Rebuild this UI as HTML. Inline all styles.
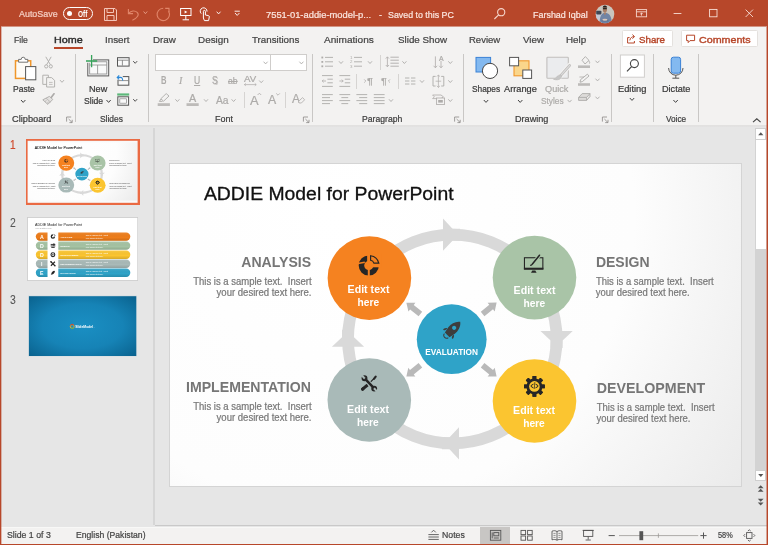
<!DOCTYPE html>
<html>
<head>
<meta charset="utf-8">
<title>PowerPoint</title>
<style>
*{box-sizing:border-box;margin:0;padding:0}
html,body{width:768px;height:545px;overflow:hidden}
body{position:relative;background:#b7472a;font-family:"Liberation Sans",sans-serif;font-size:11.5px;color:#3b3a39}
.abs,.t{position:absolute;white-space:nowrap}
.t{line-height:14px;height:14px}
#titlebar{position:absolute;left:0;top:0;width:768px;height:27px;background:#b7472a;color:#fff}
#tabs{position:absolute;left:1px;top:27px;width:766px;height:23px;background:#f3f2f1}
#ribbon{position:absolute;left:1px;top:50px;width:766px;height:75px;background:#f3f2f1}
#work{position:absolute;left:1px;top:125px;width:766px;height:402px;background:#e6e6e6}
#status{position:absolute;left:1px;top:527px;width:766px;height:17px;background:#f3f2f1}
.sep{position:absolute;width:1px;background:#c8c6c4;top:54px;height:66px}
.glabel{position:absolute;top:112px;height:14px;line-height:14px;font-size:11px;color:#444}
#app{position:absolute;left:0;top:0;width:768px;height:545px;will-change:transform;overflow:hidden}
svg{position:absolute;overflow:visible}
svg text{white-space:pre}
</style>
</head>
<body>
<div id="app">
<div id="titlebar"></div>
<div id="tabs"></div>
<div id="ribbon"></div>
<div id="work"></div>
<div id="status"></div>
<span class="t" style="left:18.90px;top:7.21px;font-size:9.4px;line-height:13px;height:13px;color:#f5cfc3;transform:scaleX(0.9494);transform-origin:0 0;-webkit-text-stroke:0.22px #f5cfc3;">AutoSave</span><div class="abs" style="left:63px;top:7.2px;width:30px;height:12.8px;border:1.1px solid #fff;border-radius:6.4px"></div><div class="abs" style="left:67px;top:11px;width:5px;height:5px;border-radius:3px;background:#fff"></div><span class="t" style="left:78.40px;top:7.70px;font-size:8.4px;line-height:12px;height:12px;color:#fff;transform:scaleX(0.7751);transform-origin:0 0;font-weight:700;">Off</span><svg width="768" height="27" style="left:0;top:0"><g fill="none" stroke="#f3c5b8" stroke-width="1"><path d="M104.5,8.5 H115 L116.5,10 V20.5 H104.5 Z"/><path d="M107,8.5 V12.5 H113.5 V8.5"/><path d="M107,20.5 V15.5 H114 V20.5"/></g><g fill="none" stroke="#e1866a" stroke-width="1.1"><path d="M128.4,9 V13.6 H133"/><path d="M128.6,13.4 C131,10.6 135,10.2 137.2,12.4 C139.6,14.8 137.6,17.6 132.4,20.2"/></g><path d="M143.60,11.50 L145.40,13.70 L147.20,11.50" fill="none" stroke="#e6a08a" stroke-width="0.9"/><g fill="none" stroke="#e1866a" stroke-width="1.1"><path d="M168.6,11.2 A6.2,6.2 0 1 1 163.2,8.2"/><path d="M165.2,8.4 H169 V12.2"/></g><g fill="none" stroke="#fff" stroke-width="1"><rect x="180.6" y="8.5" width="10.4" height="7"/><path d="M185.8,15.5 V19.6 M182.6,19.8 H189"/><path d="M184.6,10.4 L187.4,12 L184.6,13.6 Z" fill="#fff" stroke="none"/></g><g fill="none" stroke="#fff" stroke-width="1"><path d="M201.2,13.6 A3.4,3.4 0 1 1 207,11.6"/><path d="M203.4,18 V11.4 a1,1 0 0 1 2,0 V15 l3,0.6 a1.2,1.2 0 0 1 0.9,1.4 L208.6,20.6 H204.4 Z"/></g><path d="M216.70,11.70 L218.60,13.90 L220.50,11.70" fill="none" stroke="#fff" stroke-width="0.9"/><path d="M234.6,11.2 H239.8" stroke="#fff" stroke-width="0.9"/><path d="M235.00,13.00 L237.20,15.40 L239.40,13.00" fill="none" stroke="#fff" stroke-width="0.9"/><g fill="none" stroke="#f6d6cc" stroke-width="1.1"><circle cx="501.2" cy="12.2" r="3.6"/><path d="M498.6,14.8 L494.4,19"/></g><g fill="none" stroke="#f6d6cc" stroke-width="0.9"><rect x="636.4" y="9.6" width="10.2" height="7.2"/><path d="M636.4,11.8 H646.6"/><path d="M641.5,15.6 V13 M640.2,14.2 L641.5,12.9 L642.8,14.2"/></g><path d="M673.6,13.5 H681.4" stroke="#fbe6df" stroke-width="0.85"/><rect x="709.6" y="9.4" width="7.4" height="7.4" fill="none" stroke="#fbe6df" stroke-width="0.85"/><path d="M745.6,9.6 L753,17 M753,9.6 L745.6,17" stroke="#fbe6df" stroke-width="0.85"/><defs><clipPath id="av"><circle cx="605" cy="14" r="9.3"/></clipPath></defs><g clip-path="url(#av)"><rect x="595" y="4" width="20" height="20" fill="#c9c5bd"/><rect x="595" y="14.2" width="7" height="10" fill="#c3c8d5"/><rect x="596.2" y="10.8" width="5.2" height="3.6" rx="0.8" fill="#3f4654"/><path d="M599.6,24 C599.6,17 601,13.4 604.9,12.8 C609.4,13.2 611.6,16 612,24 Z" fill="#7185a5"/><path d="M603.6,12.6 L604.9,15.4 L606.3,12.6 Z" fill="#a97f66"/><ellipse cx="604.9" cy="9.4" rx="2.1" ry="2.9" fill="#a97f66"/><path d="M602.6,8.4 a2.3,2.9 0 0 1 4.6,0 L607.2,7.6 L602.6,7.6 Z" fill="#26211f"/><rect x="602.9" y="8.0" width="4" height="1.3" rx="0.5" fill="#2a2522"/><path d="M601.4,21.6 L608.6,21.6 L608.2,19.4 L601.8,19.4 Z" fill="#5f7394"/><ellipse cx="604.9" cy="19.7" rx="2.6" ry="1.0" fill="#dcc8ba"/></g></svg><span class="t" style="left:266.30px;top:7.61px;font-size:9.4px;line-height:13px;height:13px;color:#fbe6df;transform:scaleX(0.9986);transform-origin:0 0;-webkit-text-stroke:0.22px #fbe6df;">7551-01-addie-model-p...</span><span class="t" style="left:379.20px;top:7.61px;font-size:9.4px;line-height:13px;height:13px;color:#fbe6df;transform:scaleX(0.9585);transform-origin:0 0;-webkit-text-stroke:0.22px #fbe6df;">-</span><span class="t" style="left:387.70px;top:7.61px;font-size:9.4px;line-height:13px;height:13px;color:#fbe6df;transform:scaleX(0.9427);transform-origin:0 0;-webkit-text-stroke:0.22px #fbe6df;">Saved to this PC</span><span class="t" style="left:532.50px;top:7.61px;font-size:9.4px;line-height:13px;height:13px;color:#fbe6df;transform:scaleX(0.9535);transform-origin:0 0;-webkit-text-stroke:0.22px #fbe6df;">Farshad Iqbal</span>
<span class="t" style="left:14.20px;top:32.71px;font-size:9.6px;line-height:13px;height:13px;color:#444;transform:scaleX(0.8986);transform-origin:0 0;-webkit-text-stroke:0.22px #444;">File</span><span class="t" style="left:104.60px;top:32.71px;font-size:9.6px;line-height:13px;height:13px;color:#444;transform:scaleX(1.0247);transform-origin:0 0;-webkit-text-stroke:0.22px #444;">Insert</span><span class="t" style="left:152.50px;top:32.71px;font-size:9.6px;line-height:13px;height:13px;color:#444;transform:scaleX(1.0223);transform-origin:0 0;-webkit-text-stroke:0.22px #444;">Draw</span><span class="t" style="left:197.70px;top:32.71px;font-size:9.6px;line-height:13px;height:13px;color:#444;transform:scaleX(1.0307);transform-origin:0 0;-webkit-text-stroke:0.22px #444;">Design</span><span class="t" style="left:251.50px;top:32.71px;font-size:9.6px;line-height:13px;height:13px;color:#444;transform:scaleX(1.0152);transform-origin:0 0;-webkit-text-stroke:0.22px #444;">Transitions</span><span class="t" style="left:323.50px;top:32.71px;font-size:9.6px;line-height:13px;height:13px;color:#444;transform:scaleX(1.0487);transform-origin:0 0;-webkit-text-stroke:0.22px #444;">Animations</span><span class="t" style="left:397.90px;top:32.71px;font-size:9.6px;line-height:13px;height:13px;color:#444;transform:scaleX(1.0203);transform-origin:0 0;-webkit-text-stroke:0.22px #444;">Slide Show</span><span class="t" style="left:469.40px;top:32.71px;font-size:9.6px;line-height:13px;height:13px;color:#444;transform:scaleX(0.9912);transform-origin:0 0;-webkit-text-stroke:0.22px #444;">Review</span><span class="t" style="left:522.50px;top:32.71px;font-size:9.6px;line-height:13px;height:13px;color:#444;transform:scaleX(1.0177);transform-origin:0 0;-webkit-text-stroke:0.22px #444;">View</span><span class="t" style="left:565.80px;top:32.71px;font-size:9.6px;line-height:13px;height:13px;color:#444;transform:scaleX(1.0231);transform-origin:0 0;-webkit-text-stroke:0.22px #444;">Help</span><span class="t" style="left:54.20px;top:32.71px;font-size:9.6px;line-height:13px;height:13px;color:#2b2b2b;transform:scaleX(1.1208);transform-origin:0 0;-webkit-text-stroke:0.4px #2b2b2b;">Home</span><div class="abs" style="left:54.2px;top:46.9px;width:29.2px;height:1.9px;background:#b7472a"></div><div class="abs" style="left:621.5px;top:30.3px;width:51.7px;height:16.8px;background:#fff;border:1px solid #e4e1de;border-radius:1.5px"></div><div class="abs" style="left:680.5px;top:30.3px;width:77.2px;height:16.8px;background:#fff;border:1px solid #e4e1de;border-radius:1.5px"></div><span class="t" style="left:639.30px;top:32.81px;font-size:9.6px;line-height:13px;height:13px;color:#b7472a;transform:scaleX(1.0150);transform-origin:0 0;-webkit-text-stroke:0.4px #b7472a;">Share</span><span class="t" style="left:698.60px;top:32.81px;font-size:9.6px;line-height:13px;height:13px;color:#b7472a;transform:scaleX(1.1140);transform-origin:0 0;-webkit-text-stroke:0.4px #b7472a;">Comments</span><svg width="768" height="24" style="left:0;top:27px"><g fill="none" stroke="#b7472a" stroke-width="1"><path d="M629.6,10.6 H627.6 V16 H634.4 V14"/><path d="M629.8,13.4 C630.2,10.8 632,9.6 634,9.6 M632.4,7.6 L634.6,9.6 L632.4,11.6"/><path d="M686.6,8.2 H694.6 V13.6 H690 L688.2,15.6 V13.6 H686.6 Z"/></g></svg>
<div class="abs" style="left:75.1px;top:54px;width:1px;height:68px;background:#c9c7c5"></div><div class="abs" style="left:147.9px;top:54px;width:1px;height:68px;background:#c9c7c5"></div><div class="abs" style="left:311.9px;top:54px;width:1px;height:68px;background:#c9c7c5"></div><div class="abs" style="left:463.3px;top:54px;width:1px;height:68px;background:#c9c7c5"></div><div class="abs" style="left:610.5px;top:54px;width:1px;height:68px;background:#c9c7c5"></div><div class="abs" style="left:652.5px;top:54px;width:1px;height:68px;background:#c9c7c5"></div><div class="abs" style="left:698.0px;top:54px;width:1px;height:68px;background:#c9c7c5"></div><div class="abs" style="left:244.1px;top:92.4px;width:1px;height:15.599999999999994px;background:#d6d4d2"></div><div class="abs" style="left:285.2px;top:92.4px;width:1px;height:15.599999999999994px;background:#d6d4d2"></div><div class="abs" style="left:379.9px;top:55px;width:1px;height:15px;background:#d6d4d2"></div><div class="abs" style="left:356.2px;top:74px;width:1px;height:15px;background:#d6d4d2"></div><div class="abs" style="left:397.5px;top:74px;width:1px;height:15px;background:#d6d4d2"></div><span class="t" style="left:11.90px;top:112.41px;font-size:9.4px;line-height:13px;height:13px;color:#3c3c3c;transform:scaleX(0.9843);transform-origin:0 0;-webkit-text-stroke:0.22px #3c3c3c;">Clipboard</span><span class="t" style="left:100.00px;top:112.41px;font-size:9.4px;line-height:13px;height:13px;color:#3c3c3c;transform:scaleX(0.8984);transform-origin:0 0;-webkit-text-stroke:0.22px #3c3c3c;">Slides</span><span class="t" style="left:214.70px;top:112.41px;font-size:9.4px;line-height:13px;height:13px;color:#3c3c3c;transform:scaleX(0.9571);transform-origin:0 0;-webkit-text-stroke:0.22px #3c3c3c;">Font</span><span class="t" style="left:361.60px;top:112.41px;font-size:9.4px;line-height:13px;height:13px;color:#3c3c3c;transform:scaleX(0.9204);transform-origin:0 0;-webkit-text-stroke:0.22px #3c3c3c;">Paragraph</span><span class="t" style="left:514.60px;top:112.41px;font-size:9.4px;line-height:13px;height:13px;color:#3c3c3c;transform:scaleX(0.9716);transform-origin:0 0;-webkit-text-stroke:0.22px #3c3c3c;">Drawing</span><span class="t" style="left:665.70px;top:112.41px;font-size:9.4px;line-height:13px;height:13px;color:#3c3c3c;transform:scaleX(0.8785);transform-origin:0 0;-webkit-text-stroke:0.22px #3c3c3c;">Voice</span><span class="t" style="left:12.60px;top:81.61px;font-size:9.4px;line-height:13px;height:13px;color:#383838;transform:scaleX(0.9070);transform-origin:0 0;-webkit-text-stroke:0.22px #383838;">Paste</span><span class="t" style="left:89.40px;top:81.61px;font-size:9.4px;line-height:13px;height:13px;color:#383838;transform:scaleX(0.9732);transform-origin:0 0;-webkit-text-stroke:0.22px #383838;">New</span><span class="t" style="left:84.30px;top:94.11px;font-size:9.4px;line-height:13px;height:13px;color:#383838;transform:scaleX(0.9186);transform-origin:0 0;-webkit-text-stroke:0.22px #383838;">Slide</span><span class="t" style="left:471.80px;top:81.61px;font-size:9.4px;line-height:13px;height:13px;color:#383838;transform:scaleX(0.8846);transform-origin:0 0;-webkit-text-stroke:0.22px #383838;">Shapes</span><span class="t" style="left:504.40px;top:81.61px;font-size:9.4px;line-height:13px;height:13px;color:#383838;transform:scaleX(0.9839);transform-origin:0 0;-webkit-text-stroke:0.22px #383838;">Arrange</span><span class="t" style="left:545.20px;top:81.61px;font-size:9.4px;line-height:13px;height:13px;color:#adaba9;transform:scaleX(0.9781);transform-origin:0 0;-webkit-text-stroke:0.22px #adaba9;">Quick</span><span class="t" style="left:541.30px;top:94.11px;font-size:9.4px;line-height:13px;height:13px;color:#adaba9;transform:scaleX(0.8868);transform-origin:0 0;-webkit-text-stroke:0.22px #adaba9;">Styles</span><span class="t" style="left:618.00px;top:81.61px;font-size:9.4px;line-height:13px;height:13px;color:#383838;transform:scaleX(0.9916);transform-origin:0 0;-webkit-text-stroke:0.22px #383838;">Editing</span><span class="t" style="left:661.80px;top:81.61px;font-size:9.4px;line-height:13px;height:13px;color:#383838;transform:scaleX(0.9742);transform-origin:0 0;-webkit-text-stroke:0.22px #383838;">Dictate</span><div class="abs" style="left:155px;top:54.2px;width:152px;height:17.2px;background:#fff;border:1px solid #cfcdcb"></div><div class="abs" style="left:270px;top:54.2px;width:1px;height:17.2px;background:#cfcdcb"></div><span class="t" style="left:161.20px;top:73.02px;font-size:10.6px;line-height:15px;height:15px;color:#adaba9;transform:scaleX(0.7185);transform-origin:0 0;font-weight:700;">B</span><span class="t" style="left:179.40px;top:73.02px;font-size:10.6px;line-height:15px;height:15px;color:#adaba9;transform:scaleX(0.9508);transform-origin:0 0;font-style:italic;-webkit-text-stroke:0.22px #adaba9;font-family:'Liberation Serif',serif;">I</span><span class="t" style="left:194.40px;top:72.82px;font-size:10.4px;line-height:15px;height:15px;color:#adaba9;transform:scaleX(0.8255);transform-origin:0 0;-webkit-text-stroke:0.22px #adaba9;text-decoration:underline;">U</span><span class="t" style="left:211.80px;top:73.22px;font-size:10.8px;line-height:15px;height:15px;color:#adaba9;transform:scaleX(0.8051);transform-origin:0 0;-webkit-text-stroke:0.22px #adaba9;text-shadow:0.8px 0.8px 0 #cfcdcb;">S</span><span class="t" style="left:227.60px;top:74.41px;font-size:9.4px;line-height:13px;height:13px;color:#adaba9;transform:scaleX(0.9183);transform-origin:0 0;-webkit-text-stroke:0.22px #adaba9;text-decoration:line-through;">ab</span><span class="t" style="left:244.20px;top:72.70px;font-size:8.6px;line-height:12px;height:12px;color:#adaba9;transform:scaleX(1.1260);transform-origin:0 0;-webkit-text-stroke:0.22px #adaba9;">AV</span><span class="t" style="left:189.40px;top:90.62px;font-size:10.8px;line-height:15px;height:15px;color:#adaba9;transform:scaleX(0.9995);transform-origin:0 0;-webkit-text-stroke:0.22px #adaba9;">A</span><span class="t" style="left:215.80px;top:92.62px;font-size:10.6px;line-height:15px;height:15px;color:#adaba9;transform:scaleX(0.9718);transform-origin:0 0;-webkit-text-stroke:0.22px #adaba9;">Aa</span><span class="t" style="left:250.00px;top:90.85px;font-size:13.4px;line-height:19px;height:19px;color:#adaba9;transform:scaleX(0.9622);transform-origin:0 0;-webkit-text-stroke:0.22px #adaba9;">A</span><span class="t" style="left:268.20px;top:92.24px;font-size:12.4px;line-height:17px;height:17px;color:#adaba9;transform:scaleX(0.9914);transform-origin:0 0;-webkit-text-stroke:0.22px #adaba9;">A</span><span class="t" style="left:291.80px;top:90.14px;font-size:12.6px;line-height:18px;height:18px;color:#adaba9;transform:scaleX(0.9519);transform-origin:0 0;-webkit-text-stroke:0.22px #adaba9;">A</span><span class="t" style="left:367.20px;top:74.41px;font-size:9.6px;line-height:13px;height:13px;color:#adaba9;transform:scaleX(1.1635);transform-origin:0 0;-webkit-text-stroke:0.22px #adaba9;">¶</span><span class="t" style="left:380.80px;top:74.41px;font-size:9.6px;line-height:13px;height:13px;color:#adaba9;transform:scaleX(1.1247);transform-origin:0 0;-webkit-text-stroke:0.22px #adaba9;">¶</span><span class="t" style="left:438.80px;top:53.98px;font-size:6.6px;line-height:9px;height:9px;color:#adaba9;transform:scaleX(1.0449);transform-origin:0 0;-webkit-text-stroke:0.22px #adaba9;">A</span><svg width="768" height="80" style="left:0;top:50px"><g transform="translate(0,-50)"><rect x="15.5" y="60.8" width="15.2" height="17.6" fill="#fefbf6" stroke="#f0962a" stroke-width="1.5"/><path d="M18.6,62.2 V59.4 H21.2 a2,2.2 0 0 1 4,0 H27.8 V62.2 Z" fill="#fff" stroke="#666" stroke-width="0.9"/><rect x="25.6" y="66.6" width="10.2" height="13.2" fill="#fff" stroke="#555" stroke-width="1"/><path d="M21.00,100.00 L23.20,102.40 L25.40,100.00" fill="none" stroke="#444" stroke-width="1"/><g fill="none" stroke="#adaba9" stroke-width="0.9"><path d="M45.8,56.8 L50.4,64.8 M51.2,56.8 L46.6,64.8"/><circle cx="46.2" cy="66.4" r="1.6"/><circle cx="50.8" cy="66.4" r="1.6"/></g><g fill="#f3f2f1" stroke="#adaba9" stroke-width="0.9"><path d="M42.8,75.2 H48.4 V84.4 H42.8 Z"/><path d="M46.6,77.6 H51.6 L54.6,80.4 V87 H46.6 Z"/><path d="M49,82.4 H52.6 M49,84.4 H52.6" stroke-width="0.7"/></g><path d="M60.00,80.10 L62.00,82.30 L64.00,80.10" fill="none" stroke="#adaba9" stroke-width="0.9"/><g fill="none" stroke="#adaba9" stroke-width="0.9"><path d="M54,93.8 L50.8,98" stroke-width="1.7" stroke-linecap="round"/><path d="M49.4,96.4 L52.8,99.4 L47.8,104.4 L42.8,99.8 Z" fill="#e4e2e0"/><path d="M46.2,98.2 L50.6,102.2 M45,101.6 L46.6,100.2 M47,103.4 L48.8,101.8" stroke-width="0.7"/></g><g fill="none" stroke="#8a8886" stroke-width="0.8"><path d="M66.6,121.6 V117 H71.19999999999999"/><path d="M68.6,119 L72.0,122.4 M72.19999999999999,119.8 V122.6 H69.39999999999999"/></g><rect x="87.8" y="59.9" width="20.9" height="16" fill="#f6f6f6" stroke="#5a5a5a" stroke-width="1"/><rect x="89.7" y="61.8" width="17.1" height="12.2" fill="#fafafa" stroke="#8a8a8a" stroke-width="0.8"/><path d="M89.7,65 H106.8 M97.6,65 V74" stroke="#8a8a8a" stroke-width="0.8"/><rect x="85.4" y="54.6" width="7.6" height="8.2" fill="#f3f2f1"/><path d="M91.6,55 V67.2 M86,61 H97.2" stroke="#35a35a" stroke-width="1.3"/><path d="M106.50,100.00 L108.60,102.40 L110.70,100.00" fill="none" stroke="#444" stroke-width="1"/><rect x="117.5" y="57.7" width="11.6" height="8.4" fill="#fafafa" stroke="#555" stroke-width="1"/><path d="M118,60.2 H128.6 M122.4,60.2 V65.6" stroke="#777" stroke-width="0.8"/><path d="M133.20,61.10 L135.20,63.30 L137.20,61.10" fill="none" stroke="#444" stroke-width="0.9"/><rect x="118" y="76.6" width="10.8" height="8.6" fill="#fafafa" stroke="#555" stroke-width="1"/><path d="M118.4,80.6 H128.4" stroke="#777" stroke-width="0.8"/><rect x="116.2" y="74.6" width="6.6" height="5" fill="#f3f2f1"/><path d="M117.2,77.4 H120.4 C122,77.4 122.8,78.6 122.6,80.6 M119.2,75.4 L117.2,77.4 L119.2,79.4" stroke="#2b88d8" stroke-width="1.1" fill="none"/><rect x="117.8" y="96.8" width="10.8" height="8.4" fill="#fafafa" stroke="#555" stroke-width="1"/><path d="M117.2,94.5 H129.2" stroke="#5cb87a" stroke-width="2.2"/><rect x="119.8" y="98.8" width="6.8" height="4.4" fill="none" stroke="#888" stroke-width="0.7"/><path d="M133.20,99.10 L135.20,101.30 L137.20,99.10" fill="none" stroke="#444" stroke-width="0.9"/><path d="M263.60,61.70 L265.60,63.90 L267.60,61.70" fill="none" stroke="#adaba9" stroke-width="0.9"/><path d="M299.40,61.70 L301.40,63.90 L303.40,61.70" fill="none" stroke="#adaba9" stroke-width="0.9"/><path d="M259.20,80.50 L261.20,82.70 L263.20,80.50" fill="none" stroke="#adaba9" stroke-width="0.9"/><path d="M244.4,84.6 H256.2 M245.8,83.4 L244.4,84.6 L245.8,85.8 M254.8,83.4 L256.2,84.6 L254.8,85.8" fill="none" stroke="#adaba9" stroke-width="0.7"/><g fill="none" stroke="#adaba9" stroke-width="0.9"><path d="M166.2,93.6 L169,96 L163.6,101.2 L160.8,98.8 Z"/><path d="M161,99 L159.4,101.4 H162.6"/></g><rect x="157.7" y="103.2" width="12.2" height="2.8" fill="#bdbbb9"/><path d="M175.40,99.30 L177.40,101.50 L179.40,99.30" fill="none" stroke="#adaba9" stroke-width="0.9"/><rect x="186.5" y="103.2" width="12.2" height="2.8" fill="#bdbbb9"/><path d="M204.00,99.30 L206.00,101.50 L208.00,99.30" fill="none" stroke="#adaba9" stroke-width="0.9"/><path d="M231.60,99.30 L233.60,101.50 L235.60,99.30" fill="none" stroke="#adaba9" stroke-width="0.9"/><path d="M257.6,95 L259.4,93.2 L261.2,95" fill="none" stroke="#adaba9" stroke-width="0.8"/><path d="M276.2,93.4 L278,95.2 L279.8,93.4" fill="none" stroke="#adaba9" stroke-width="0.8"/><path d="M299.6,100.4 L302.6,97.6 L304.6,99.8 L301.4,103 L299.2,103 L298.6,101.6 Z" fill="#f3f2f1" stroke="#adaba9" stroke-width="0.8"/><g fill="none" stroke="#8a8886" stroke-width="0.8"><path d="M303.4,121.6 V117 H308.0"/><path d="M305.4,119 L308.79999999999995,122.4 M309.0,119.8 V122.6 H306.2"/></g><rect x="321.4" y="56.6" width="1.8" height="1.8" fill="#adaba9"/><rect x="321.4" y="61.0" width="1.8" height="1.8" fill="#adaba9"/><rect x="321.4" y="65.4" width="1.8" height="1.8" fill="#adaba9"/><path d="M325,57.4 H333" stroke="#adaba9" stroke-width="0.9"/><path d="M325,61.8 H333" stroke="#adaba9" stroke-width="0.9"/><path d="M325,66.2 H333" stroke="#adaba9" stroke-width="0.9"/><path d="M339.00,61.30 L341.00,63.50 L343.00,61.30" fill="none" stroke="#adaba9" stroke-width="0.9"/><text x="350" y="59.0" font-size="4.4" fill="#adaba9">1</text><text x="350" y="63.4" font-size="4.4" fill="#adaba9">2</text><text x="350" y="67.8" font-size="4.4" fill="#adaba9">3</text><path d="M354,57.4 H362" stroke="#adaba9" stroke-width="0.9"/><path d="M354,61.8 H362" stroke="#adaba9" stroke-width="0.9"/><path d="M354,66.2 H362" stroke="#adaba9" stroke-width="0.9"/><path d="M368.00,61.30 L370.00,63.50 L372.00,61.30" fill="none" stroke="#adaba9" stroke-width="0.9"/><path d="M390.4,57.2 H398.8" stroke="#adaba9" stroke-width="0.9"/><path d="M390.4,60.2 H398.8" stroke="#adaba9" stroke-width="0.9"/><path d="M390.4,63.2 H398.8" stroke="#adaba9" stroke-width="0.9"/><path d="M390.4,66.2 H398.8" stroke="#adaba9" stroke-width="0.9"/><path d="M387.4,57 V66.6 M385.8,58.6 L387.4,56.8 L389,58.6 M385.8,65 L387.4,66.8 L389,65" fill="none" stroke="#adaba9" stroke-width="0.8"/><path d="M402.40,61.30 L404.40,63.50 L406.40,61.30" fill="none" stroke="#adaba9" stroke-width="0.9"/><path d="M435.4,56.4 V67.6 M433.6,65.8 L435.4,67.8 L437.2,65.8 M441,60.8 V67.6 M439.2,65.8 L441,67.8 L442.8,65.8" fill="none" stroke="#adaba9" stroke-width="0.8"/><path d="M448.30,61.30 L450.30,63.50 L452.30,61.30" fill="none" stroke="#adaba9" stroke-width="0.9"/><path d="M322,75.6 H332.8" stroke="#adaba9" stroke-width="0.9"/><path d="M322,86.4 H332.8" stroke="#adaba9" stroke-width="0.9"/><path d="M327.4,79.2 H332.8" stroke="#adaba9" stroke-width="0.9"/><path d="M327.4,82.8 H332.8" stroke="#adaba9" stroke-width="0.9"/><path d="M326,81 H322.2 M323.6,79.6 L322.2,81 L323.6,82.4" fill="none" stroke="#adaba9" stroke-width="0.8"/><path d="M339.4,75.6 H350.2" stroke="#adaba9" stroke-width="0.9"/><path d="M339.4,86.4 H350.2" stroke="#adaba9" stroke-width="0.9"/><path d="M344.8,79.2 H350.2" stroke="#adaba9" stroke-width="0.9"/><path d="M344.8,82.8 H350.2" stroke="#adaba9" stroke-width="0.9"/><path d="M339.4,81 H343.2 M341.8,79.6 L343.2,81 L341.8,82.4" fill="none" stroke="#adaba9" stroke-width="0.8"/><path d="M364.2,79.4 L365.8,81 L364.2,82.6" fill="none" stroke="#adaba9" stroke-width="0.8"/><path d="M390,79.4 L388.4,81 L390,82.6" fill="none" stroke="#adaba9" stroke-width="0.8"/><path d="M405,78 H409.4" stroke="#adaba9" stroke-width="0.9"/><path d="M405,81 H409.4" stroke="#adaba9" stroke-width="0.9"/><path d="M405,84 H409.4" stroke="#adaba9" stroke-width="0.9"/><path d="M411,78 H415.4" stroke="#adaba9" stroke-width="0.9"/><path d="M411,81 H415.4" stroke="#adaba9" stroke-width="0.9"/><path d="M411,84 H415.4" stroke="#adaba9" stroke-width="0.9"/><path d="M420.00,80.30 L422.00,82.50 L424.00,80.30" fill="none" stroke="#adaba9" stroke-width="0.9"/><path d="M435.6,76.4 H433 V86 H435.6 M441.2,76.4 H443.8 V86 H441.2" fill="none" stroke="#adaba9" stroke-width="0.9"/><path d="M438.4,75 V87.4 M436.8,76.6 L438.4,75 L440,76.6 M436.8,85.8 L438.4,87.4 L440,85.8 M435.6,81.2 H441.2" fill="none" stroke="#adaba9" stroke-width="0.7"/><path d="M448.30,80.30 L450.30,82.50 L452.30,80.30" fill="none" stroke="#adaba9" stroke-width="0.9"/><path d="M322,94.6 H332.8" stroke="#adaba9" stroke-width="0.9"/><path d="M322,100.6 H332.8" stroke="#adaba9" stroke-width="0.9"/><path d="M322,97.6 H330" stroke="#adaba9" stroke-width="0.9"/><path d="M322,103.6 H330" stroke="#adaba9" stroke-width="0.9"/><path d="M339.4,94.6 H350.2" stroke="#adaba9" stroke-width="0.9"/><path d="M339.4,100.6 H350.2" stroke="#adaba9" stroke-width="0.9"/><path d="M341.4,97.6 H348.2" stroke="#adaba9" stroke-width="0.9"/><path d="M341.4,103.6 H348.2" stroke="#adaba9" stroke-width="0.9"/><path d="M356.4,94.6 H367.2" stroke="#adaba9" stroke-width="0.9"/><path d="M356.4,100.6 H367.2" stroke="#adaba9" stroke-width="0.9"/><path d="M359.2,97.6 H367.2" stroke="#adaba9" stroke-width="0.9"/><path d="M359.2,103.6 H367.2" stroke="#adaba9" stroke-width="0.9"/><path d="M373.8,94.6 H384.6" stroke="#adaba9" stroke-width="0.9"/><path d="M373.8,97.6 H384.6" stroke="#adaba9" stroke-width="0.9"/><path d="M373.8,100.6 H384.6" stroke="#adaba9" stroke-width="0.9"/><path d="M373.8,103.6 H384.6" stroke="#adaba9" stroke-width="0.9"/><path d="M389.00,99.30 L391.00,101.50 L393.00,99.30" fill="none" stroke="#adaba9" stroke-width="0.9"/><path d="M432.6,95 H441 L443.4,96.8 L441,98.6 H432.6 L434.4,96.8 Z" fill="none" stroke="#adaba9" stroke-width="0.8"/><rect x="436.4" y="98" width="8.2" height="6.4" fill="#f3f2f1" stroke="#adaba9" stroke-width="0.8"/><rect x="438.2" y="100" width="4.6" height="2.6" fill="#adaba9"/><path d="M448.30,99.30 L450.30,101.50 L452.30,99.30" fill="none" stroke="#adaba9" stroke-width="0.9"/><g fill="none" stroke="#8a8886" stroke-width="0.8"><path d="M454.6,121.6 V117 H459.20000000000005"/><path d="M456.6,119 L460.0,122.4 M460.20000000000005,119.8 V122.6 H457.40000000000003"/></g><rect x="476" y="57.4" width="14.6" height="14.6" fill="#83b9f0" stroke="#3b82d6" stroke-width="1"/><circle cx="490" cy="70.9" r="7.6" fill="#fff" stroke="#444" stroke-width="1"/><path d="M483.80,100.00 L486.00,102.40 L488.20,100.00" fill="none" stroke="#444" stroke-width="1"/><rect x="514" y="60.8" width="15" height="15" fill="#fad68b" stroke="#f0982d" stroke-width="1.1"/><rect x="509.6" y="57.4" width="9" height="8.4" fill="#fff" stroke="#555" stroke-width="1"/><rect x="522.8" y="70" width="8.8" height="8.4" fill="#fff" stroke="#555" stroke-width="1"/><path d="M518.00,100.00 L520.20,102.40 L522.40,100.00" fill="none" stroke="#444" stroke-width="1"/><rect x="546.9" y="57.3" width="21.4" height="20.9" rx="0.8" fill="#ebecee" stroke="#c1bfbd" stroke-width="1.1"/><path d="M570.6,64.4 L558.6,77.8" stroke="#f3f2f1" stroke-width="4.8"/><path d="M569.7,65.4 L560.6,75.6" stroke="#bcbab8" stroke-width="2.6" stroke-linecap="round"/><path d="M569.7,65.4 L560.6,75.6" stroke="#dcdcdc" stroke-width="1.3" stroke-linecap="round"/><path d="M561.2,75.0 C559,74.6 557.4,75.6 556.4,77.2 C555.6,78.4 554.6,79 553.4,79.2 C556,80.4 559.4,80 560.8,78.2 C561.6,77.2 561.8,76 561.2,75.0 Z" fill="#c6c6c6" stroke="#b9b7b5" stroke-width="0.5"/><path d="M567.60,99.90 L569.60,102.10 L571.60,99.90" fill="none" stroke="#adaba9" stroke-width="0.9"/><path d="M582,60.2 L585.4,56.6 L589,60.4 L585,64 Z M588.6,60.6 C589.8,62 590,63 589.4,63.6" fill="none" stroke="#adaba9" stroke-width="0.9"/><rect x="578" y="65.4" width="12" height="2.6" fill="#bdbbb9"/><path d="M595.50,60.70 L597.50,62.90 L599.50,60.70" fill="none" stroke="#adaba9" stroke-width="0.9"/><path d="M580,82.2 L580.6,79.6 L587.4,74.2 L589,76 L582.4,81.6 Z" fill="none" stroke="#adaba9" stroke-width="0.9"/><path d="M579.4,77 H584" stroke="#adaba9" stroke-width="0.8"/><rect x="578" y="83.2" width="12" height="2.6" fill="#bdbbb9"/><path d="M595.50,78.70 L597.50,80.90 L599.50,78.70" fill="none" stroke="#adaba9" stroke-width="0.9"/><path d="M578.6,97.4 L582.2,93.6 H590 L586.6,97.4 Z M578.6,97.4 V100.4 H586.6 V97.4 M586.6,100.4 L590,96.6 V93.6" fill="#dddbd9" stroke="#adaba9" stroke-width="0.9" stroke-linejoin="round"/><path d="M595.50,96.70 L597.50,98.90 L599.50,96.70" fill="none" stroke="#adaba9" stroke-width="0.9"/><g fill="none" stroke="#8a8886" stroke-width="0.8"><path d="M602.4,121.6 V117 H607.0"/><path d="M604.4,119 L607.8,122.4 M608.0,119.8 V122.6 H605.1999999999999"/></g><rect x="620.4" y="55" width="24" height="22.2" fill="#fff" stroke="#d0cecc" stroke-width="1"/><circle cx="634.4" cy="63.6" r="4" fill="none" stroke="#444" stroke-width="1.1"/><path d="M631.6,66.6 L627,71.4" stroke="#444" stroke-width="1.2"/><path d="M629.80,98.00 L632.00,100.40 L634.20,98.00" fill="none" stroke="#444" stroke-width="1"/><path d="M668.6,68 a7.2,7.2 0 0 0 14.4,0" fill="none" stroke="#555" stroke-width="1"/><path d="M675.8,75.2 V78 M672.4,78.2 H679.2" stroke="#555" stroke-width="1"/><rect x="671.2" y="57.2" width="9.4" height="16" rx="2.2" fill="#83b9f0" stroke="#3b82d6" stroke-width="1"/><path d="M673.40,100.00 L675.60,102.40 L677.80,100.00" fill="none" stroke="#444" stroke-width="1"/><path d="M753,122.2 L756.8,118.8 L760.6,122.2" fill="none" stroke="#444" stroke-width="1.1"/></g></svg>
<div class="abs" style="left:153px;top:128px;width:2px;height:397px;background:#d6d6d6"></div><div class="abs" style="left:1px;top:124.6px;width:766px;height:2.4px;background:linear-gradient(#e3e2e1,#e1e0df 60%,#e5e5e5)"></div><div class="abs" style="left:25.6px;top:138.8px;width:114px;height:65.8px;background:#ea6a43"></div><div class="abs" style="left:27.4px;top:217.4px;width:110.4px;height:63.2px;background:#cdcdcd"></div><div class="abs" style="left:27.6px;top:294.9px;width:109.8px;height:62.2px;background:#dde1e3"></div><svg width="160" height="400" style="left:0;top:125px;font-family:'Liberation Sans',sans-serif"><g transform="translate(0,-125)"><rect x="27.6" y="140.8" width="110" height="62" fill="#f9f9f9"/><g transform="translate(28.2,142.4) scale(0.19,0.18) translate(-169,-163)"><defs><radialGradient id="sbgt" gradientUnits="userSpaceOnUse" cx="340" cy="215" r="490"><stop offset="0" stop-color="#ffffff"/><stop offset="0.6" stop-color="#fdfdfd"/><stop offset="1" stop-color="#eaeaea"/></radialGradient></defs><rect x="169" y="163" width="572" height="323" fill="url(#sbgt)"/><text stroke="#111" stroke-width="0.3" transform="translate(203.90,199.90) scale(1.0591,1)" font-size="18.3" fill="#111">ADDIE Model for PowerPoint</text><circle cx="452.3" cy="339.0" r="104.3" fill="none" stroke="#d9d9d9" stroke-width="11.8"/><polygon points="443.0,250.8 452.5,240.7 460.0,240.7 460.0,228.7 452.5,228.7 443.0,218.6" fill="#d9d9d9"/><polygon points="540.5,331.1 550.6,340.6 550.6,348.1 562.6,348.1 562.6,340.6 572.7,331.1" fill="#d9d9d9"/><polygon points="459.0,427.2 449.5,437.3 442.0,437.3 442.0,449.3 449.5,449.3 459.0,459.4" fill="#d9d9d9"/><polygon points="364.1,346.7 354.0,337.2 354.0,329.7 342.0,329.7 342.0,337.2 331.9,346.7" fill="#d9d9d9"/><polygon points="406.4,302.8 408.4,311.5 410.1,309.4 418.6,316.3 422.2,311.7 413.7,304.9 415.4,302.8" fill="#b9b9b9"/><polygon points="496.6,302.6 487.6,302.7 489.3,304.8 480.8,311.8 484.4,316.2 493.0,309.3 494.7,311.4" fill="#b9b9b9"/><polygon points="406.4,376.6 415.4,376.5 413.7,374.4 422.2,367.4 418.6,363.0 410.0,369.9 408.3,367.8" fill="#b9b9b9"/><polygon points="496.6,376.6 494.7,367.8 493.0,369.9 484.4,363.0 480.8,367.4 489.3,374.4 487.6,376.5" fill="#b9b9b9"/><circle cx="369.4" cy="278.1" r="41.8" fill="#f58220"/><circle cx="534.5" cy="277.6" r="41.8" fill="#a9c4a7"/><circle cx="369.3" cy="400.0" r="41.8" fill="#a9bab8"/><circle cx="534.5" cy="401.0" r="41.8" fill="#fbc530"/><circle cx="451.7" cy="339.2" r="34.9" fill="#2fa3c8"/><g transform="translate(368.8,265.5)"><circle r="7.35" fill="none" stroke="#262626" stroke-width="5.5"/><rect x="-1.65" y="-12" width="14" height="13.8" fill="#f58220"/><rect x="-1" y="0" width="2" height="11.5" fill="#f58220"/><path d="M-11,-1.9 L-4,-3.2" stroke="#f58220" stroke-width="1.5"/><path d="M1.8,-9.8 A9.8,9.8 0 0 1 10,-2.4 L5.1,-2.4 A4.3,4.3 0 0 0 1.8,-5.3 Z" fill="#f58220" stroke="#262626" stroke-width="1.15" stroke-linejoin="miter"/></g><g fill="none" stroke="#262626"><rect x="524.45" y="257.75" width="18.4" height="11.2" stroke-width="1.1"/><rect x="523.9" y="267.7" width="19.5" height="1.9" fill="#262626" stroke="none"/><path d="M531.0,272.8 L536.6,272.8 L535.3,270.5 L532.3,270.5 Z" fill="#262626" stroke="none"/><path d="M540.2,254.4 L534.6,261.4" stroke="#a9c4a7" stroke-width="3.4"/><path d="M539.5,255.2 L532.6,263.8" stroke-width="1.5" stroke-linecap="round"/><path d="M532.8,263.4 L530.0,265.5 L532.0,265.2 Z" fill="#262626" stroke-width="0.6"/></g><g stroke="#262626" stroke-linecap="round" fill="none"><path d="M361.9,389.6 L367.6,385.0" stroke-width="3.0" stroke-linecap="butt"/><path d="M362.5,389.3 L363.2,388.7" stroke-width="3.0"/><path d="M368.0,384.6 L375.4,377.0" stroke-width="1.1"/><path d="M374.0,378.9 L375.7,376.7" stroke-width="2.1"/><path d="M365.4,379.2 L373.4,387.6" stroke="#a9bab8" stroke-width="4.4" stroke-linecap="butt"/><path d="M365.6,379.4 L373.2,387.4" stroke-width="2.5"/><circle cx="364.5" cy="378.2" r="2.0" stroke-width="1.9"/><path d="M364.3,378.0 L361.6,375.2" stroke="#a9bab8" stroke-width="2.0" stroke-linecap="butt"/><circle cx="374.2" cy="388.6" r="2.0" stroke-width="1.9"/><path d="M374.4,388.8 L377.2,391.6" stroke="#a9bab8" stroke-width="2.0" stroke-linecap="butt"/></g><g transform="translate(534.4,386.4)"><rect x="-1.9" y="-10.4" width="3.8" height="20.8" rx="0.5" fill="#262626" transform="rotate(0)"/><rect x="-1.9" y="-10.4" width="3.8" height="20.8" rx="0.5" fill="#262626" transform="rotate(45)"/><rect x="-1.9" y="-10.4" width="3.8" height="20.8" rx="0.5" fill="#262626" transform="rotate(90)"/><rect x="-1.9" y="-10.4" width="3.8" height="20.8" rx="0.5" fill="#262626" transform="rotate(135)"/><rect x="-1.9" y="-10.4" width="3.8" height="20.8" rx="0.5" fill="#262626" transform="rotate(180)"/><rect x="-1.9" y="-10.4" width="3.8" height="20.8" rx="0.5" fill="#262626" transform="rotate(225)"/><rect x="-1.9" y="-10.4" width="3.8" height="20.8" rx="0.5" fill="#262626" transform="rotate(270)"/><rect x="-1.9" y="-10.4" width="3.8" height="20.8" rx="0.5" fill="#262626" transform="rotate(315)"/><circle r="8.0" fill="#262626"/><circle r="5.3" fill="#fbc530"/><text transform="translate(-4.00,2.90) scale(0.6587,1)" font-size="8.4" fill="#262626" font-weight="700">&lt;/&gt;</text></g><g transform="translate(453.0,329.0) rotate(45)" fill="#3d3d3d"><path d="M0,-10.2 C3.6,-7.6 5.2,-2.6 4.6,2 L3.3,8.2 L-3.3,8.2 L-4.6,2 C-5.2,-2.6 -3.6,-7.6 0,-10.2 Z"/><ellipse cx="-5.5" cy="5.6" rx="0.9" ry="2.1" transform="rotate(25 -5.5 5.6)"/><ellipse cx="5.5" cy="5.6" rx="0.9" ry="2.1" transform="rotate(-25 5.5 5.6)"/><circle cx="0" cy="-1.6" r="2.1" fill="#2fa3c8"/><path d="M-2.7,9.4 C-2.9,12.6 2.9,12.6 2.7,9.4" fill="none" stroke="#3d3d3d" stroke-width="1"/></g><text transform="translate(347.60,292.70) scale(1.0414,1)" font-size="10.2" fill="#fff" font-weight="700">Edit text</text><text transform="translate(357.50,306.20) scale(1.0026,1)" font-size="10.2" fill="#fff" font-weight="700">here</text><text transform="translate(513.60,293.70) scale(1.0414,1)" font-size="10.2" fill="#fff" font-weight="700">Edit text</text><text transform="translate(523.60,307.00) scale(1.0026,1)" font-size="10.2" fill="#fff" font-weight="700">here</text><text transform="translate(347.10,412.70) scale(1.0414,1)" font-size="10.2" fill="#fff" font-weight="700">Edit text</text><text transform="translate(357.10,426.20) scale(1.0026,1)" font-size="10.2" fill="#fff" font-weight="700">here</text><text transform="translate(513.10,413.70) scale(1.0414,1)" font-size="10.2" fill="#fff" font-weight="700">Edit text</text><text transform="translate(523.20,427.00) scale(1.0026,1)" font-size="10.2" fill="#fff" font-weight="700">here</text><text transform="translate(425.30,354.90) scale(0.9537,1)" font-size="8.7" fill="#fff" font-weight="700">EVALUATION</text><text transform="translate(241.30,266.70) scale(1.0129,1)" font-size="13.9" fill="#767676" font-weight="700">ANALYSIS</text><text transform="translate(193.20,284.50) scale(0.9325,1)" font-size="10.2" fill="#787878" stroke="#787878" stroke-width="0.22">This is a sample text.  Insert</text><text transform="translate(216.60,295.60) scale(0.9362,1)" font-size="10.2" fill="#787878" stroke="#787878" stroke-width="0.22">your desired text here.</text><text transform="translate(186.00,391.90) scale(1.0168,1)" font-size="13.9" fill="#767676" font-weight="700">IMPLEMENTATION</text><text transform="translate(193.20,409.70) scale(0.9325,1)" font-size="10.2" fill="#787878" stroke="#787878" stroke-width="0.22">This is a sample text.  Insert</text><text transform="translate(216.60,420.80) scale(0.9362,1)" font-size="10.2" fill="#787878" stroke="#787878" stroke-width="0.22">your desired text here.</text><text transform="translate(595.90,266.80) scale(1.0095,1)" font-size="13.9" fill="#767676" font-weight="700">DESIGN</text><text transform="translate(595.90,284.60) scale(0.9301,1)" font-size="10.2" fill="#787878" stroke="#787878" stroke-width="0.22">This is a sample text.  Insert</text><text transform="translate(595.70,295.60) scale(0.9273,1)" font-size="10.2" fill="#787878" stroke="#787878" stroke-width="0.22">your desired text here.</text><text transform="translate(596.80,392.90) scale(1.0245,1)" font-size="13.9" fill="#767676" font-weight="700">DEVELOPMENT</text><text transform="translate(596.80,410.70) scale(0.9286,1)" font-size="10.2" fill="#787878" stroke="#787878" stroke-width="0.22">This is a sample text.  Insert</text><text transform="translate(596.40,421.70) scale(0.9283,1)" font-size="10.2" fill="#787878" stroke="#787878" stroke-width="0.22">your desired text here.</text></g><g transform="translate(27.9,217.9)"><defs><linearGradient id="t2g" x1="0" y1="0" x2="0" y2="1"><stop offset="0" stop-color="#fff" stop-opacity="0.10"/><stop offset="0.6" stop-color="#000" stop-opacity="0"/><stop offset="1" stop-color="#000" stop-opacity="0.14"/></linearGradient></defs><rect x="0" y="0" width="109.4" height="62.2" fill="#fff"/><text transform="translate(7.20,8.40) scale(0.8716,1)" font-size="4.2" fill="#222">ADDIE Model for PowerPoint</text><text transform="translate(7.20,11.20) scale(1.2759,1)" font-size="1.7" fill="#999">Your subtitle here</text><path d="M12.1,14.5 H19.6 V22.9 H12.1 a4.2,4.2 0 0 1 0,-8.4 Z" fill="#ee7d1a"/><path d="M30.4,14.5 H98.2 a4.2,4.2 0 0 1 0,8.4 H30.4 Z" fill="#ee7d1a"/><path d="M12.1,14.5 H19.6 V22.9 H12.1 a4.2,4.2 0 0 1 0,-8.4 Z" fill="url(#t2g)"/><path d="M30.4,14.5 H98.2 a4.2,4.2 0 0 1 0,8.4 H30.4 Z" fill="url(#t2g)"/><text transform="translate(12.02,20.60) scale(1.0000,1)" font-size="5.2" fill="#fff" font-weight="700">A</text><circle cx="25" cy="18.7" r="1.6" fill="none" stroke="#262626" stroke-width="1.3"/><path d="M25,18.7 L25,15.7 L28,15.7 L28,18.7 Z" fill="#fff"/><path d="M25.6,16.5 a1.8,1.8 0 0 1 1.7,1.6" fill="none" stroke="#262626" stroke-width="0.6"/><text transform="translate(32.60,19.60) scale(0.9500,1)" font-size="2.5" fill="#fff" font-weight="700">ANALYSIS</text><text transform="translate(57.80,18.10) scale(0.9556,1)" font-size="1.9" fill="#fff">This is a sample text.  Insert</text><text transform="translate(57.80,20.60) scale(0.9417,1)" font-size="1.9" fill="#fff">your desired text here.</text><path d="M12.1,23.55 H19.6 V31.950000000000003 H12.1 a4.2,4.2 0 0 1 0,-8.4 Z" fill="#a5c3a3"/><path d="M30.4,23.55 H98.2 a4.2,4.2 0 0 1 0,8.4 H30.4 Z" fill="#a5c3a3"/><path d="M12.1,23.55 H19.6 V31.950000000000003 H12.1 a4.2,4.2 0 0 1 0,-8.4 Z" fill="url(#t2g)"/><path d="M30.4,23.55 H98.2 a4.2,4.2 0 0 1 0,8.4 H30.4 Z" fill="url(#t2g)"/><text transform="translate(12.02,29.65) scale(1.0000,1)" font-size="5.2" fill="#fff" font-weight="700">D</text><path d="M22.8,26.55 H27.4 M22.8,28.05 H27.4 M23.4,29.55 H26.8" stroke="#262626" stroke-width="0.9"/><path d="M26,25.35 V27.95" stroke="#262626" stroke-width="0.9"/><text transform="translate(32.60,28.65) scale(0.9500,1)" font-size="2.5" fill="#fff" font-weight="700">DESIGN</text><text transform="translate(57.80,27.15) scale(0.9556,1)" font-size="1.9" fill="#fff">This is a sample text.  Insert</text><text transform="translate(57.80,29.65) scale(0.9417,1)" font-size="1.9" fill="#fff">your desired text here.</text><path d="M12.1,32.6 H19.6 V41.0 H12.1 a4.2,4.2 0 0 1 0,-8.4 Z" fill="#fbc530"/><path d="M30.4,32.6 H98.2 a4.2,4.2 0 0 1 0,8.4 H30.4 Z" fill="#fbc530"/><path d="M12.1,32.6 H19.6 V41.0 H12.1 a4.2,4.2 0 0 1 0,-8.4 Z" fill="url(#t2g)"/><path d="M30.4,32.6 H98.2 a4.2,4.2 0 0 1 0,8.4 H30.4 Z" fill="url(#t2g)"/><text transform="translate(12.02,38.70) scale(1.0000,1)" font-size="5.2" fill="#fff" font-weight="700">D</text><circle cx="25" cy="36.800000000000004" r="1.9" fill="none" stroke="#262626" stroke-width="1.1"/><circle cx="25" cy="36.800000000000004" r="0.7" fill="#262626"/><text transform="translate(32.60,37.70) scale(0.9500,1)" font-size="2.5" fill="#fff" font-weight="700">DEVELOPMENT</text><text transform="translate(57.80,36.20) scale(0.9556,1)" font-size="1.9" fill="#fff">This is a sample text.  Insert</text><text transform="translate(57.80,38.70) scale(0.9417,1)" font-size="1.9" fill="#fff">your desired text here.</text><path d="M12.1,41.650000000000006 H19.6 V50.050000000000004 H12.1 a4.2,4.2 0 0 1 0,-8.4 Z" fill="#a9bab8"/><path d="M30.4,41.650000000000006 H98.2 a4.2,4.2 0 0 1 0,8.4 H30.4 Z" fill="#a9bab8"/><path d="M12.1,41.650000000000006 H19.6 V50.050000000000004 H12.1 a4.2,4.2 0 0 1 0,-8.4 Z" fill="url(#t2g)"/><path d="M30.4,41.650000000000006 H98.2 a4.2,4.2 0 0 1 0,8.4 H30.4 Z" fill="url(#t2g)"/><text transform="translate(13.18,47.75) scale(1.0000,1)" font-size="5.2" fill="#fff" font-weight="700">I</text><path d="M23,43.85000000000001 L27,47.85000000000001 M27,43.85000000000001 L23,47.85000000000001" stroke="#262626" stroke-width="1.1"/><circle cx="23" cy="43.85000000000001" r="0.8" fill="#262626"/><circle cx="27" cy="47.85000000000001" r="0.8" fill="#262626"/><text transform="translate(32.60,46.75) scale(0.9500,1)" font-size="2.5" fill="#fff" font-weight="700">IMPLEMENTATION</text><text transform="translate(57.80,45.25) scale(0.9556,1)" font-size="1.9" fill="#fff">This is a sample text.  Insert</text><text transform="translate(57.80,47.75) scale(0.9417,1)" font-size="1.9" fill="#fff">your desired text here.</text><path d="M12.1,50.7 H19.6 V59.1 H12.1 a4.2,4.2 0 0 1 0,-8.4 Z" fill="#2fa3c8"/><path d="M30.4,50.7 H98.2 a4.2,4.2 0 0 1 0,8.4 H30.4 Z" fill="#2fa3c8"/><path d="M12.1,50.7 H19.6 V59.1 H12.1 a4.2,4.2 0 0 1 0,-8.4 Z" fill="url(#t2g)"/><path d="M30.4,50.7 H98.2 a4.2,4.2 0 0 1 0,8.4 H30.4 Z" fill="url(#t2g)"/><text transform="translate(12.17,56.80) scale(1.0000,1)" font-size="5.2" fill="#fff" font-weight="700">E</text><ellipse cx="25.2" cy="54.7" rx="2.3" ry="1.1" fill="#262626" transform="rotate(-45 25.2 54.7)"/><path d="M23.2,56.300000000000004 L24,57.10000000000001" stroke="#262626" stroke-width="0.6"/><text transform="translate(32.60,55.80) scale(0.9500,1)" font-size="2.5" fill="#fff" font-weight="700">EVALUATION</text><text transform="translate(57.80,54.30) scale(0.9556,1)" font-size="1.9" fill="#fff">This is a sample text.  Insert</text><text transform="translate(57.80,56.80) scale(0.9417,1)" font-size="1.9" fill="#fff">your desired text here.</text></g><defs><radialGradient id="t3g" cx="0.5" cy="0.5" r="0.75"><stop offset="0" stop-color="#1a8fc3"/><stop offset="0.5" stop-color="#1683b6"/><stop offset="1" stop-color="#085d88"/></radialGradient></defs><rect x="28.9" y="296.2" width="107.4" height="59.8" fill="url(#t3g)"/><circle cx="72.2" cy="326.5" r="1.9" fill="none" stroke="#e9b22c" stroke-width="1"/><path d="M70.4,325.6 a1.9,1.9 0 0 1 3.4,-0.4" fill="none" stroke="#d9452b" stroke-width="1"/><path d="M71,328 a1.9,1.9 0 0 0 2.8,-0.4" fill="none" stroke="#5db045" stroke-width="1"/><text transform="translate(75.20,327.80) scale(0.9473,1)" font-size="3.6" fill="#fff" font-weight="700">SlideModel</text><text transform="translate(93.40,327.80) scale(0.7999,1)" font-size="2.4" fill="#cfe3ee">...</text></g></svg><span class="t" style="left:10.00px;top:136.64px;font-size:12.2px;line-height:17px;height:17px;color:#cf4a2c;transform:scaleX(0.8254);transform-origin:0 0;-webkit-text-stroke:0.22px #cf4a2c;">1</span><span class="t" style="left:10.20px;top:213.54px;font-size:48.8px;line-height:68px;height:68px;color:#555;transform:scale(0.2137,0.2500);transform-origin:0 0;-webkit-text-stroke:0.22px #555;">2</span><span class="t" style="left:10.20px;top:291.24px;font-size:48.8px;line-height:68px;height:68px;color:#555;transform:scale(0.2137,0.2500);transform-origin:0 0;-webkit-text-stroke:0.22px #555;">3</span><div class="abs" style="left:754.6px;top:128.2px;width:11.8px;height:352.6px;background:#d3d3d3"></div><div class="abs" style="left:755.2px;top:128.4px;width:11.2px;height:11.2px;background:#fff;border:1px solid #cfcfcf"></div><div class="abs" style="left:755.6px;top:140.2px;width:10.6px;height:108.6px;background:#fff"></div><div class="abs" style="left:755.2px;top:469.8px;width:11.2px;height:11px;background:#fff;border:1px solid #cfcfcf"></div><svg width="20" height="400" style="left:750px;top:125px"><g transform="translate(-750,-125)" fill="#555"><path d="M758.2,135.2 L760.8,132.2 L763.4,135.2 Z"/><path d="M758.2,474 L760.8,477 L763.4,474 Z"/><path d="M757.8,488.2 L760.7,485.2 L763.6,488.2 Z M757.8,491.8 L760.7,488.8 L763.6,491.8 Z"/><path d="M757.8,498.8 L760.7,501.8 L763.6,498.8 Z M757.8,502.4 L760.7,505.4 L763.6,502.4 Z"/></g></svg><div class="abs" style="left:155px;top:524.5px;width:612px;height:1.2px;background:#c9c9c9"></div><div class="abs" style="left:1px;top:526.6px;width:766px;height:1px;background:#f8f8f7"></div>
<svg width="768" height="545" style="left:0;top:0;font-family:'Liberation Sans',sans-serif"><defs><radialGradient id="sbg" gradientUnits="userSpaceOnUse" cx="340" cy="215" r="490"><stop offset="0" stop-color="#ffffff"/><stop offset="0.6" stop-color="#fdfdfd"/><stop offset="1" stop-color="#eaeaea"/></radialGradient></defs><rect x="169" y="163" width="572" height="323" fill="url(#sbg)"/><text stroke="#111" stroke-width="0.3" transform="translate(203.90,199.90) scale(1.0591,1)" font-size="18.3" fill="#111">ADDIE Model for PowerPoint</text><circle cx="452.3" cy="339.0" r="104.3" fill="none" stroke="#d9d9d9" stroke-width="11.8"/><polygon points="443.0,250.8 452.5,240.7 460.0,240.7 460.0,228.7 452.5,228.7 443.0,218.6" fill="#d9d9d9"/><polygon points="540.5,331.1 550.6,340.6 550.6,348.1 562.6,348.1 562.6,340.6 572.7,331.1" fill="#d9d9d9"/><polygon points="459.0,427.2 449.5,437.3 442.0,437.3 442.0,449.3 449.5,449.3 459.0,459.4" fill="#d9d9d9"/><polygon points="364.1,346.7 354.0,337.2 354.0,329.7 342.0,329.7 342.0,337.2 331.9,346.7" fill="#d9d9d9"/><polygon points="406.4,302.8 408.4,311.5 410.1,309.4 418.6,316.3 422.2,311.7 413.7,304.9 415.4,302.8" fill="#b9b9b9"/><polygon points="496.6,302.6 487.6,302.7 489.3,304.8 480.8,311.8 484.4,316.2 493.0,309.3 494.7,311.4" fill="#b9b9b9"/><polygon points="406.4,376.6 415.4,376.5 413.7,374.4 422.2,367.4 418.6,363.0 410.0,369.9 408.3,367.8" fill="#b9b9b9"/><polygon points="496.6,376.6 494.7,367.8 493.0,369.9 484.4,363.0 480.8,367.4 489.3,374.4 487.6,376.5" fill="#b9b9b9"/><circle cx="369.4" cy="278.1" r="41.8" fill="#f58220"/><circle cx="534.5" cy="277.6" r="41.8" fill="#a9c4a7"/><circle cx="369.3" cy="400.0" r="41.8" fill="#a9bab8"/><circle cx="534.5" cy="401.0" r="41.8" fill="#fbc530"/><circle cx="451.7" cy="339.2" r="34.9" fill="#2fa3c8"/><g transform="translate(368.8,265.5)"><circle r="7.35" fill="none" stroke="#262626" stroke-width="5.5"/><rect x="-1.65" y="-12" width="14" height="13.8" fill="#f58220"/><rect x="-1" y="0" width="2" height="11.5" fill="#f58220"/><path d="M-11,-1.9 L-4,-3.2" stroke="#f58220" stroke-width="1.5"/><path d="M1.8,-9.8 A9.8,9.8 0 0 1 10,-2.4 L5.1,-2.4 A4.3,4.3 0 0 0 1.8,-5.3 Z" fill="#f58220" stroke="#262626" stroke-width="1.15" stroke-linejoin="miter"/></g><g fill="none" stroke="#262626"><rect x="524.45" y="257.75" width="18.4" height="11.2" stroke-width="1.1"/><rect x="523.9" y="267.7" width="19.5" height="1.9" fill="#262626" stroke="none"/><path d="M531.0,272.8 L536.6,272.8 L535.3,270.5 L532.3,270.5 Z" fill="#262626" stroke="none"/><path d="M540.2,254.4 L534.6,261.4" stroke="#a9c4a7" stroke-width="3.4"/><path d="M539.5,255.2 L532.6,263.8" stroke-width="1.5" stroke-linecap="round"/><path d="M532.8,263.4 L530.0,265.5 L532.0,265.2 Z" fill="#262626" stroke-width="0.6"/></g><g stroke="#262626" stroke-linecap="round" fill="none"><path d="M361.9,389.6 L367.6,385.0" stroke-width="3.0" stroke-linecap="butt"/><path d="M362.5,389.3 L363.2,388.7" stroke-width="3.0"/><path d="M368.0,384.6 L375.4,377.0" stroke-width="1.1"/><path d="M374.0,378.9 L375.7,376.7" stroke-width="2.1"/><path d="M365.4,379.2 L373.4,387.6" stroke="#a9bab8" stroke-width="4.4" stroke-linecap="butt"/><path d="M365.6,379.4 L373.2,387.4" stroke-width="2.5"/><circle cx="364.5" cy="378.2" r="2.0" stroke-width="1.9"/><path d="M364.3,378.0 L361.6,375.2" stroke="#a9bab8" stroke-width="2.0" stroke-linecap="butt"/><circle cx="374.2" cy="388.6" r="2.0" stroke-width="1.9"/><path d="M374.4,388.8 L377.2,391.6" stroke="#a9bab8" stroke-width="2.0" stroke-linecap="butt"/></g><g transform="translate(534.4,386.4)"><rect x="-1.9" y="-10.4" width="3.8" height="20.8" rx="0.5" fill="#262626" transform="rotate(0)"/><rect x="-1.9" y="-10.4" width="3.8" height="20.8" rx="0.5" fill="#262626" transform="rotate(45)"/><rect x="-1.9" y="-10.4" width="3.8" height="20.8" rx="0.5" fill="#262626" transform="rotate(90)"/><rect x="-1.9" y="-10.4" width="3.8" height="20.8" rx="0.5" fill="#262626" transform="rotate(135)"/><rect x="-1.9" y="-10.4" width="3.8" height="20.8" rx="0.5" fill="#262626" transform="rotate(180)"/><rect x="-1.9" y="-10.4" width="3.8" height="20.8" rx="0.5" fill="#262626" transform="rotate(225)"/><rect x="-1.9" y="-10.4" width="3.8" height="20.8" rx="0.5" fill="#262626" transform="rotate(270)"/><rect x="-1.9" y="-10.4" width="3.8" height="20.8" rx="0.5" fill="#262626" transform="rotate(315)"/><circle r="8.0" fill="#262626"/><circle r="5.3" fill="#fbc530"/><text transform="translate(-4.00,2.90) scale(0.6587,1)" font-size="8.4" fill="#262626" font-weight="700">&lt;/&gt;</text></g><g transform="translate(453.0,329.0) rotate(45)" fill="#3d3d3d"><path d="M0,-10.2 C3.6,-7.6 5.2,-2.6 4.6,2 L3.3,8.2 L-3.3,8.2 L-4.6,2 C-5.2,-2.6 -3.6,-7.6 0,-10.2 Z"/><ellipse cx="-5.5" cy="5.6" rx="0.9" ry="2.1" transform="rotate(25 -5.5 5.6)"/><ellipse cx="5.5" cy="5.6" rx="0.9" ry="2.1" transform="rotate(-25 5.5 5.6)"/><circle cx="0" cy="-1.6" r="2.1" fill="#2fa3c8"/><path d="M-2.7,9.4 C-2.9,12.6 2.9,12.6 2.7,9.4" fill="none" stroke="#3d3d3d" stroke-width="1"/></g><text transform="translate(347.60,292.70) scale(1.0414,1)" font-size="10.2" fill="#fff" font-weight="700">Edit text</text><text transform="translate(357.50,306.20) scale(1.0026,1)" font-size="10.2" fill="#fff" font-weight="700">here</text><text transform="translate(513.60,293.70) scale(1.0414,1)" font-size="10.2" fill="#fff" font-weight="700">Edit text</text><text transform="translate(523.60,307.00) scale(1.0026,1)" font-size="10.2" fill="#fff" font-weight="700">here</text><text transform="translate(347.10,412.70) scale(1.0414,1)" font-size="10.2" fill="#fff" font-weight="700">Edit text</text><text transform="translate(357.10,426.20) scale(1.0026,1)" font-size="10.2" fill="#fff" font-weight="700">here</text><text transform="translate(513.10,413.70) scale(1.0414,1)" font-size="10.2" fill="#fff" font-weight="700">Edit text</text><text transform="translate(523.20,427.00) scale(1.0026,1)" font-size="10.2" fill="#fff" font-weight="700">here</text><text transform="translate(425.30,354.90) scale(0.9537,1)" font-size="8.7" fill="#fff" font-weight="700">EVALUATION</text><text transform="translate(241.30,266.70) scale(1.0129,1)" font-size="13.9" fill="#767676" font-weight="700">ANALYSIS</text><text transform="translate(193.20,284.50) scale(0.9325,1)" font-size="10.2" fill="#787878" stroke="#787878" stroke-width="0.22">This is a sample text.  Insert</text><text transform="translate(216.60,295.60) scale(0.9362,1)" font-size="10.2" fill="#787878" stroke="#787878" stroke-width="0.22">your desired text here.</text><text transform="translate(186.00,391.90) scale(1.0168,1)" font-size="13.9" fill="#767676" font-weight="700">IMPLEMENTATION</text><text transform="translate(193.20,409.70) scale(0.9325,1)" font-size="10.2" fill="#787878" stroke="#787878" stroke-width="0.22">This is a sample text.  Insert</text><text transform="translate(216.60,420.80) scale(0.9362,1)" font-size="10.2" fill="#787878" stroke="#787878" stroke-width="0.22">your desired text here.</text><text transform="translate(595.90,266.80) scale(1.0095,1)" font-size="13.9" fill="#767676" font-weight="700">DESIGN</text><text transform="translate(595.90,284.60) scale(0.9301,1)" font-size="10.2" fill="#787878" stroke="#787878" stroke-width="0.22">This is a sample text.  Insert</text><text transform="translate(595.70,295.60) scale(0.9273,1)" font-size="10.2" fill="#787878" stroke="#787878" stroke-width="0.22">your desired text here.</text><text transform="translate(596.80,392.90) scale(1.0245,1)" font-size="13.9" fill="#767676" font-weight="700">DEVELOPMENT</text><text transform="translate(596.80,410.70) scale(0.9286,1)" font-size="10.2" fill="#787878" stroke="#787878" stroke-width="0.22">This is a sample text.  Insert</text><text transform="translate(596.40,421.70) scale(0.9283,1)" font-size="10.2" fill="#787878" stroke="#787878" stroke-width="0.22">your desired text here.</text></svg><div class="abs" style="left:168.5px;top:162.5px;width:573px;height:324px;border:1px solid #d4d4d4"></div>
<span class="t" style="left:7.30px;top:528.91px;font-size:9.2px;line-height:13px;height:13px;color:#444;transform:scaleX(0.9516);transform-origin:0 0;-webkit-text-stroke:0.22px #444;">Slide 1 of 3</span><span class="t" style="left:76.40px;top:528.91px;font-size:9.2px;line-height:13px;height:13px;color:#444;transform:scaleX(0.9388);transform-origin:0 0;-webkit-text-stroke:0.22px #444;">English (Pakistan)</span><div class="abs" style="left:480px;top:527.4px;width:30.4px;height:16.4px;background:#c8c6c4"></div><span class="t" style="left:441.60px;top:528.91px;font-size:9.2px;line-height:13px;height:13px;color:#444;transform:scaleX(0.9487);transform-origin:0 0;-webkit-text-stroke:0.22px #444;">Notes</span><span class="t" style="left:717.50px;top:528.91px;font-size:9.2px;line-height:13px;height:13px;color:#444;transform:scaleX(0.7984);transform-origin:0 0;-webkit-text-stroke:0.22px #444;">58%</span><svg width="768" height="20" style="left:0;top:525px"><g transform="translate(0,-525)" fill="none" stroke="#555" stroke-width="0.9"><path d="M428.4,534.6 H438.8 M428.4,537 H438.8 M428.4,539.4 H438.8"/><path d="M431.4,532.4 L433.6,530.2 L435.8,532.4" /><rect x="490.4" y="530.4" width="10.4" height="9.8"/><rect x="493.8" y="532.6" width="5" height="3.2"/><path d="M492.2,532.4 V538.4 M493.8,538 H498.8"/><rect x="521" y="530.4" width="4.6" height="4.2"/><rect x="521" y="536" width="4.6" height="4.2"/><rect x="527.6" y="530.4" width="4.6" height="4.2"/><rect x="527.6" y="536" width="4.6" height="4.2"/><path d="M552,531.2 C554,530.4 555.6,530.6 557,531.6 C558.4,530.6 560,530.4 562,531.2 V539.8 C560,539.2 558.4,539.4 557,540.2 C555.6,539.4 554,539.2 552,539.8 Z M557,531.6 V540.2"/><path d="M553.4,533.4 H555.6 M553.4,535.4 H555.6 M553.4,537.4 H555.6 M558.4,533.4 H560.6 M558.4,535.4 H560.6 M558.4,537.4 H560.6" stroke-width="0.6"/><rect x="583.6" y="530.4" width="9.2" height="6"/><path d="M582.6,530.4 H593.8 M588.2,536.4 V539.6 M585.6,540 H590.8"/><path d="M608.6,535.6 H614.8" stroke-width="1"/><path d="M619,535.6 H698.2" stroke="#9a9896" stroke-width="0.8"/><path d="M658.4,533.4 V537.8" stroke="#9a9896" stroke-width="0.8"/><rect x="639.4" y="531.2" width="3.8" height="9" fill="#555" stroke="none"/><path d="M700.4,535.6 H706.6 M703.5,532.5 V538.7" stroke-width="1"/><rect x="746.6" y="532.6" width="5.4" height="5.8"/><path d="M747.9,531 L749.3,529.8 L750.7,531 M747.9,540 L749.3,541.2 L750.7,540 M745,534.2 L743.8,535.5 L745,536.8 M753.6,534.2 L754.8,535.5 L753.6,536.8"/></g></svg>
<div class="abs" style="left:1px;top:27px;width:1px;height:517px;background:rgba(183,71,42,0.35)"></div><div class="abs" style="left:766px;top:27px;width:1px;height:517px;background:rgba(183,71,42,0.45)"></div><div class="abs" style="left:1px;top:26px;width:766px;height:1px;background:rgba(243,242,241,0.45)"></div>
</div>
</body>
</html>
